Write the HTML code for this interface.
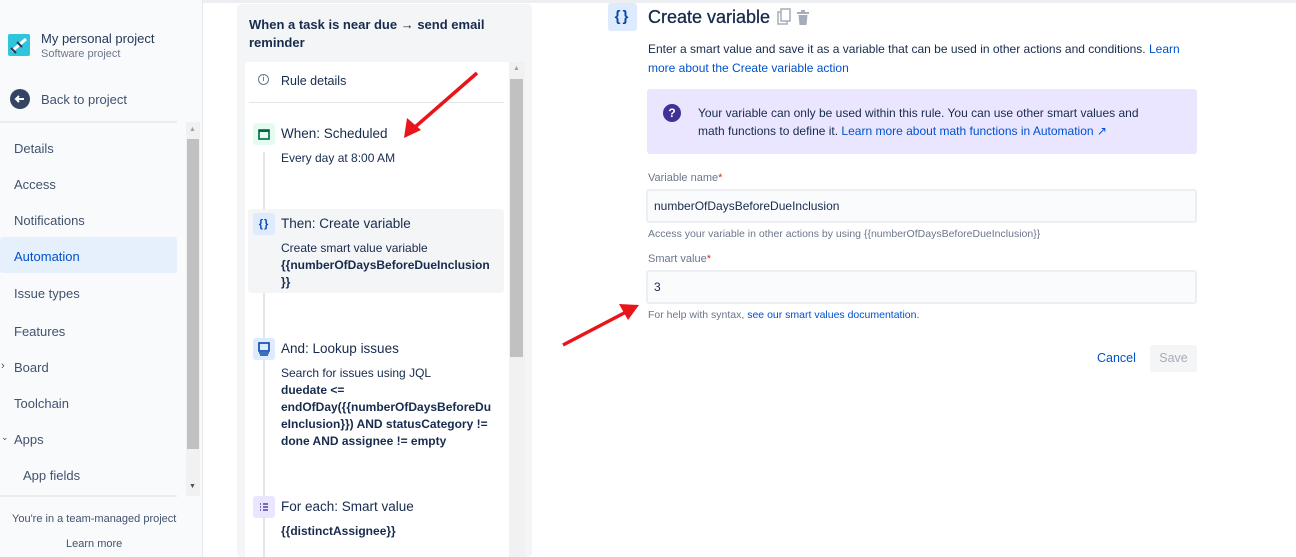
<!DOCTYPE html>
<html><head><meta charset="utf-8"><style>
*{box-sizing:border-box;margin:0;padding:0}
body{width:1296px;height:557px;overflow:hidden;background:#fff;font-family:"Liberation Sans",sans-serif;color:#172b4d;position:relative}
.a{position:absolute}
.side{left:0;top:0;width:203px;height:557px;background:#f9fafc;border-right:1px solid #e6e8ec}
.nav{position:absolute;left:14px;font-size:13px;color:#42526e}
.link{color:#0052cc}
.item{position:absolute;left:0;width:265px}
.ic{position:absolute;left:8px;width:22px;height:22px;border-radius:3px;font-size:11px;text-align:center;line-height:22px;font-weight:bold}
.tt{position:absolute;left:36px;font-size:13.5px;color:#172b4d}
.ds{position:absolute;left:36px;font-size:12px;line-height:17px;color:#172b4d;width:222px}
</style></head><body>
<div class="a" style="left:0;top:0;width:1296px;height:3px;background:#eceef2"></div>
<div class="a side">
  <div class="a" style="left:8px;top:34px;width:22px;height:22px;background:#2ec5dd;border-radius:2px"></div>
  <svg class="a" style="left:8px;top:34px" width="22" height="22"><path d="M4 17 L18 5" stroke="#fff" stroke-width="3"/><path d="M3 14 l5 5 M9 8 l5 5" stroke="#253858" stroke-width="2"/></svg>
  <div class="a" style="left:41px;top:31px;font-size:13px;color:#253858">My personal project</div>
  <div class="a" style="left:41px;top:48px;font-size:11px;color:#6b778c">Software project</div>
  <div class="a" style="left:10px;top:89px;width:20px;height:20px;border-radius:50%;background:#344563"></div>
  <svg class="a" style="left:10px;top:89px" width="20" height="20"><path d="M14 10H6 M9 7l-3 3 3 3" stroke="#fff" stroke-width="2" fill="none"/></svg>
  <div class="a" style="left:41px;top:92px;font-size:13px;color:#42526e">Back to project</div>
  <div class="a" style="left:0;top:121px;width:177px;height:2px;background:#ebecf0"></div>
  <div class="nav" style="top:141px">Details</div>
  <div class="nav" style="top:177px">Access</div>
  <div class="nav" style="top:213px">Notifications</div>
  <div class="a" style="left:0;top:237px;width:177px;height:36px;background:#e6effc;border-radius:3px"></div>
  <div class="nav" style="top:249px;color:#0052cc">Automation</div>
  <div class="nav" style="top:286px">Issue types</div>
  <div class="nav" style="top:324px">Features</div>
  <div class="a" style="left:1px;top:360px;font-size:11px;color:#42526e">›</div>
  <div class="nav" style="top:360px">Board</div>
  <div class="nav" style="top:396px">Toolchain</div>
  <div class="a" style="left:1px;top:432px;font-size:9px;color:#42526e">⌄</div>
  <div class="nav" style="top:432px">Apps</div>
  <div class="nav" style="top:468px;left:23px">App fields</div>
  <div class="a" style="left:186px;top:122px;width:14px;height:374px;background:#f1f1f1"></div>
  <div class="a" style="left:187px;top:139px;width:12px;height:310px;background:#c1c1c1"></div>
  <div class="a" style="left:189px;top:126px;font-size:7px;color:#a3a3a3">▲</div>
  <div class="a" style="left:189px;top:483px;font-size:7px;color:#505050">▼</div>
  <div class="a" style="left:0;top:495px;width:177px;height:2px;background:#ebecf0"></div>
  <div class="a" style="left:12px;top:513px;font-size:11px;color:#42526e">You're in a team-managed project</div>
  <div class="a" style="left:66px;top:538px;font-size:11px;color:#42526e">Learn more</div>
</div>

<div class="a" style="left:237px;top:4px;width:295px;height:553px;background:#f4f5f7;border-radius:4px"></div>
<div class="a" style="left:249px;top:16px;font-size:13px;font-weight:bold;color:#172b4d;line-height:18px;width:270px">When a task is near due → send email reminder</div>
<div class="a" style="left:245px;top:62px;width:264px;height:495px;background:#fff;border-radius:3px 0 0 0">
  <div class="a" style="left:13px;top:12px;width:11px;height:11px;border:1.5px solid #6b778c;border-radius:50%;font-size:7px;text-align:center;line-height:9px;color:#6b778c;font-weight:bold">i</div>
  <div class="a" style="left:36px;top:12px;font-size:12.5px;color:#172b4d">Rule details</div>
  <div class="a" style="left:4px;top:40px;width:255px;height:1px;background:#e4e5e8"></div>
  <div class="a" style="left:18px;top:90px;width:2px;height:405px;background:#e2e4e8"></div>
  <div class="item" style="top:61px">
    <div class="ic" style="background:#e3fcef;top:0"><svg width="22" height="22"><rect x="6" y="7" width="10" height="9" fill="none" stroke="#006644" stroke-width="1.6"/><rect x="6" y="7" width="10" height="2" fill="#006644"/></svg></div>
    <div class="tt" style="top:3px">When: Scheduled</div>
    <div class="ds" style="top:27px">Every day at 8:00 AM</div>
  </div>
  <div class="a" style="left:3px;top:147px;width:256px;height:84px;background:#f4f5f7;border-radius:3px"></div>
  <div class="item" style="top:151px">
    <div class="ic" style="background:#deebff;color:#0747a6;top:0;letter-spacing:1px">{}</div>
    <div class="tt" style="top:3px">Then: Create variable</div>
    <div class="ds" style="top:27px">Create smart value variable<br><b>{{numberOfDaysBeforeDueInclusion<br>}}</b></div>
  </div>
  <div class="item" style="top:276px">
    <div class="ic" style="background:#deebff;top:0"><svg width="22" height="22"><rect x="6" y="5" width="10" height="8" fill="none" stroke="#0747a6" stroke-width="1.6"/><path d="M6 15h10M7 17h8" stroke="#0747a6" stroke-width="1.4"/></svg></div>
    <div class="tt" style="top:3px">And: Lookup issues</div>
    <div class="ds" style="top:27px">Search for issues using JQL<br><b>duedate &lt;=<br>endOfDay({{numberOfDaysBeforeDu<br>eInclusion}}) AND statusCategory !=<br>done AND assignee != empty</b></div>
  </div>
  <div class="item" style="top:434px">
    <div class="ic" style="background:#eae6ff;top:0"><svg width="22" height="22"><path d="M7 8h1M10 8h5M7 11h1M10 11h5M7 14h1M10 14h5" stroke="#5243aa" stroke-width="1.5"/></svg></div>
    <div class="tt" style="top:3px">For each: Smart value</div>
    <div class="ds" style="top:27px"><b>{{distinctAssignee}}</b></div>
  </div>
</div>
<div class="a" style="left:509px;top:62px;width:16px;height:495px;background:#f1f1f1"></div>
<div class="a" style="left:510px;top:79px;width:13px;height:278px;background:#c1c1c1"></div>
<div class="a" style="left:513px;top:65px;font-size:7px;color:#a3a3a3">▲</div>

<div class="a" style="left:608px;top:3px;width:29px;height:28px;background:#deebff;border-radius:3px;color:#0747a6;font-weight:bold;font-size:15px;text-align:center;line-height:28px;letter-spacing:2px">{}</div>
<div class="a" style="left:648px;top:7px;font-size:18px;color:#172b4d;-webkit-text-stroke:0.3px #172b4d">Create variable</div>
<svg class="a" style="left:775px;top:8px" width="36" height="20"><rect x="3" y="4" width="9" height="12" fill="none" stroke="#a5adba" stroke-width="1.5"/><rect x="6" y="1" width="9" height="12" fill="#fff" stroke="#a5adba" stroke-width="1.5"/><path d="M22 5h12" stroke="#a5adba" stroke-width="2"/><path d="M23.5 7h9l-1 10h-7z" fill="#a5adba"/><rect x="26" y="2" width="4" height="2" fill="#a5adba"/></svg>
<div class="a" style="left:648px;top:40px;width:560px;font-size:12px;line-height:19px;color:#172b4d">Enter a smart value and save it as a variable that can be used in other actions and conditions. <span class="link">Learn more about the Create variable action</span></div>
<div class="a" style="left:647px;top:89px;width:550px;height:65px;background:#eae6ff;border-radius:3px"></div>
<div class="a" style="left:663px;top:104px;width:18px;height:18px;border-radius:50%;background:#403294;color:#fff;font-size:12px;font-weight:bold;text-align:center;line-height:18px">?</div>
<div class="a" style="left:698px;top:104px;width:460px;font-size:12px;line-height:18px;color:#172b4d">Your variable can only be used within this rule. You can use other smart values and math functions to define it. <span class="link">Learn more about math functions in Automation ↗</span></div>
<div class="a" style="left:648px;top:172px;font-size:11px;color:#6b778c">Variable name<span style="color:#de350b">*</span></div>
<div class="a" style="left:646px;top:189px;width:551px;height:34px;background:#fafbfc;border:2px solid #eceef2;border-radius:3px;font-size:12px;line-height:30px;padding-left:6px">numberOfDaysBeforeDueInclusion</div>
<div class="a" style="left:648px;top:228px;font-size:10.5px;color:#6b778c">Access your variable in other actions by using {{numberOfDaysBeforeDueInclusion}}</div>
<div class="a" style="left:648px;top:253px;font-size:11px;color:#6b778c">Smart value<span style="color:#de350b">*</span></div>
<div class="a" style="left:646px;top:270px;width:551px;height:34px;background:#fafbfc;border:2px solid #eceef2;border-radius:3px;font-size:12px;line-height:30px;padding-left:6px">3</div>
<div class="a" style="left:648px;top:309px;font-size:10.5px;color:#6b778c">For help with syntax, <span class="link">see our smart values documentation.</span></div>
<div class="a" style="left:1097px;top:351px;font-size:12.5px;color:#0052cc">Cancel</div>
<div class="a" style="left:1150px;top:345px;width:47px;height:27px;background:#f4f5f7;border-radius:3px;color:#a5adba;font-size:12.5px;text-align:center;line-height:27px">Save</div>

<svg class="a" style="left:0;top:0" width="1296" height="557">
<path d="M477 73 L414 128" stroke="#e8161b" stroke-width="3.5"/>
<path d="M404 138 L407 118 L421 130 Z" fill="#e8161b"/>
<path d="M563 345 L628 311" stroke="#e8161b" stroke-width="3.5"/>
<path d="M639 305 L619 304 L628 320 Z" fill="#e8161b"/>
</svg>
</body></html>
